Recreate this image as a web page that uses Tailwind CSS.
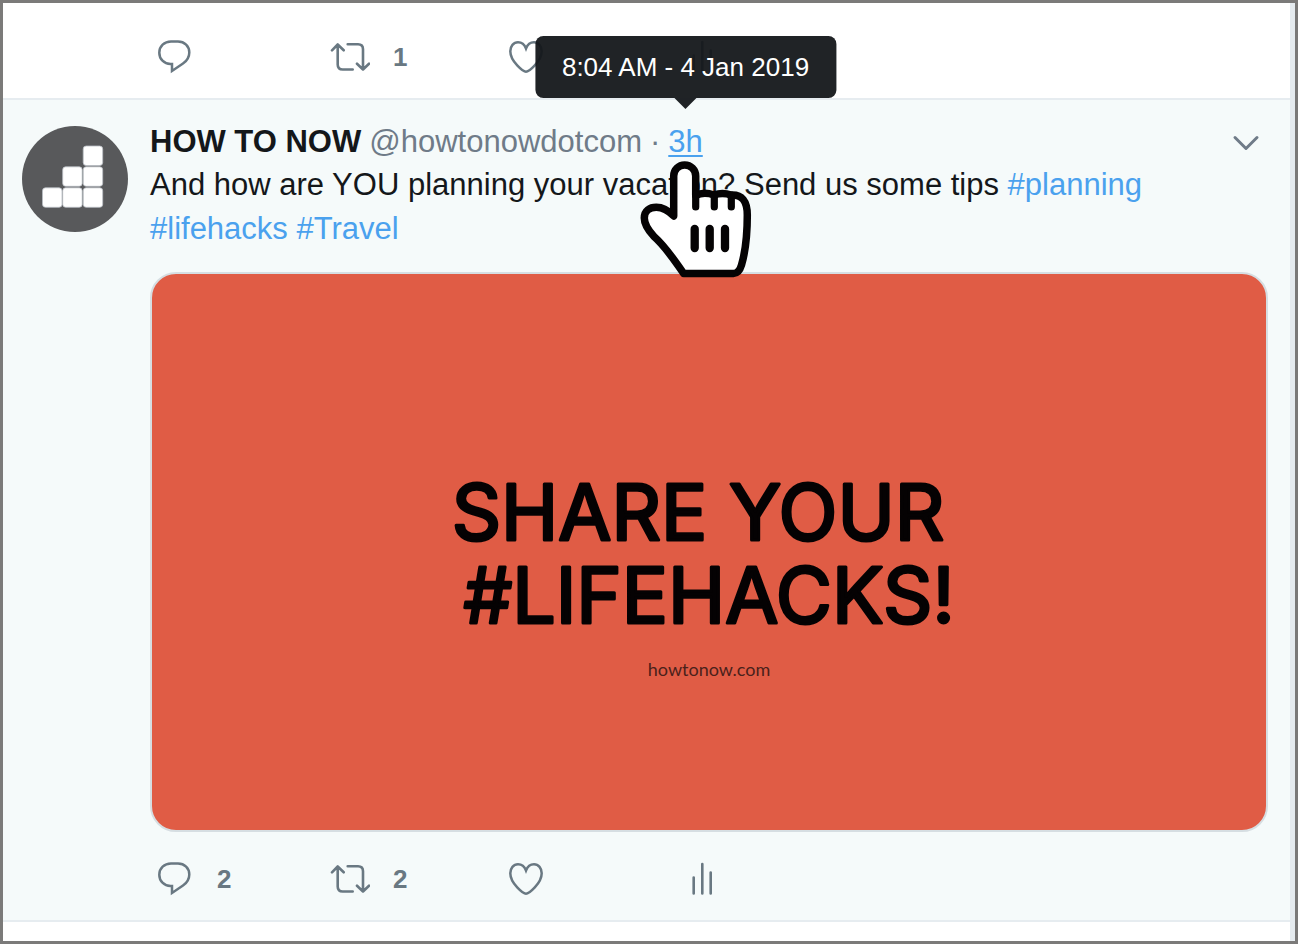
<!DOCTYPE html>
<html lang="en">
<head>
<meta charset="utf-8">
<meta name="viewport" content="width=device-width, initial-scale=1">
<title>HOW TO NOW</title>
<script src="https://cdn.jsdelivr.net/npm/@tailwindcss/browser@4"></script>
</head>
<body class="bg-white font-['Liberation_Sans',Arial,sans-serif] text-[#14171a]">
<svg class="hidden" aria-hidden="true">
  <symbol id="reply" viewBox="0 0 40 40"><path d="M17 4.500h7c6.500 0 11.300 4.700 11.300 11 0 5-2.300 8.300-6.300 11L18 34v-7h-1.500C10 26.800 5.300 22 5.300 15.700 5.300 9.200 10.300 4.500 17 4.500z" stroke-width="2.500"/></symbol>
  <symbol id="retweet" viewBox="0 0 40 40"><path d="M2 13.300 7.700 7.500l6 5.800M7.700 8v19.500q0 5 5 5h10M17.700 7.300H28q5 0 5 5V32M27 26.700 33 32.500l6-5.800" stroke-width="2.600"/></symbol>
  <symbol id="heart" viewBox="0 0 40 40"><path d="M20 11.500C18.500 7.500 15.500 5.200 12 5.200c-4.500 0-7.700 4-7.700 9C4.300 24.500 17.500 34.700 20 34.700S35.700 24.500 35.700 14.200c0-5-3.200-9-7.700-9-3.500 0-6.500 2.300-8 6.300z" stroke-width="2.500"/></symbol>
  <symbol id="activity" viewBox="0 0 40 40"><path d="M11.700 18.500v16M20.300 5v29.500M28.700 13.500v21" stroke-width="2.600"/></symbol>
</svg>

<main class="flex min-h-screen flex-col border-3 border-[#7b7a79]">
  <div class="flex grow flex-col border-r-5 border-[#e6ecf0]">

    <article class="border-b-2 border-[#e6ecf0] pt-[34px] pb-[21px] pl-[151px]">
      <div class="flex text-[26px] leading-10 font-bold text-[#697882]">
        <button type="button" class="flex w-44 gap-[23px]" aria-label="Reply"><svg class="size-10 fill-none stroke-current" stroke-linecap="round"><use href="#reply"/></svg></button>
        <button type="button" class="flex w-44 gap-[23px]" aria-label="Retweet, 1"><svg class="size-10 fill-none stroke-current" stroke-linecap="round" stroke-linejoin="round"><use href="#retweet"/></svg>1</button>
        <button type="button" class="flex w-44" aria-label="Like"><svg class="size-10 fill-none stroke-current"><use href="#heart"/></svg></button>
        <button type="button" class="flex" aria-label="View activity"><svg class="size-10 fill-none stroke-current" stroke-linecap="round"><use href="#activity"/></svg></button>
      </div>
    </article>

    <article class="flex gap-[22px] border-b-2 border-[#e6ecf0] bg-[#f5fafa] pt-[21px] pr-[22px] pb-[21px] pl-[19px]">
      <svg class="mt-[5px] size-[106px] shrink-0" viewBox="0 0 106 106" role="img" aria-label="HOW TO NOW logo">
        <circle cx="53" cy="53" r="53" fill="#58595b"/>
        <g fill="#fff" stroke="#b9bec4" stroke-width=".8">
          <rect x="61.200" y="20" width="19.500" height="19.500" rx="3"/>
          <rect x="40.700" y="40.800" width="19.500" height="19.500" rx="3"/>
          <rect x="61.200" y="40.800" width="19.500" height="19.500" rx="3"/>
          <rect x="20.500" y="61.800" width="19.500" height="19.500" rx="3"/>
          <rect x="40.700" y="61.800" width="19.500" height="19.500" rx="3"/>
          <rect x="61.200" y="61.800" width="19.500" height="19.500" rx="3"/>
        </g>
      </svg>

      <div class="min-w-0 grow">
        <header class="flex items-start justify-between text-[31px] leading-[42px]">
          <div class="flex">
            <a href="#" class="font-bold">HOW TO NOW</a>
            <a href="#" class="ml-2 text-[#6f7b88]">@howtonowdotcom</a>
            <span class="ml-2 text-[#6f7b88]">·</span>
            <a href="#" class="relative ml-2 text-[#4aa1ee] underline decoration-2 underline-offset-3">3h
              <span role="tooltip" class="absolute bottom-full left-1/2 mb-[23px] -translate-x-1/2 rounded-lg bg-[#14171a]/95 px-[27px] text-[26px] leading-[62px] whitespace-nowrap text-white">8:04 AM - 4 Jan 2019<span class="absolute top-full left-1/2 -translate-x-1/2 border-x-11 border-t-11 border-x-transparent border-t-[#14171a]/95"></span></span>
              <svg class="absolute top-[39px] left-1/2 z-10 h-[120px] w-[112px] -translate-x-[46px]" viewBox="0 0 112 120" aria-hidden="true">
                <path d="M33.700 56V16a11 11 0 0 1 22 0v19.500q8-4 18.300-.5 8.500-3 17 0 16.300-1 16.300 20c0 17-2 37-5.800 50q-2.500 8.500-8 8.500H43.700C36 103 27 88 14 76.500 7 69 4.300 64 4.300 58c0-7.500 5.500-10.700 12-10.700 7 0 12.500 3.700 17.400 8.700z" fill="#fff" stroke="#050304" stroke-width="7.500" stroke-linejoin="round"/>
                <path d="M55.700 34v13M74.300 35v12M91.300 35v12" fill="none" stroke="#050304" stroke-width="7.200" stroke-linecap="round"/>
                <path d="M54.700 69v19M69.700 69v19M85 69v19" fill="none" stroke="#050304" stroke-width="8.300" stroke-linecap="round"/>
              </svg>
            </a>
          </div>
          <button type="button" class="flex h-10 w-11 items-center justify-center text-[#6f7b88]" aria-label="More"><svg class="h-5 w-7 fill-none stroke-current" viewBox="0 0 28 20" stroke-width="3" stroke-linecap="round" stroke-linejoin="round"><path d="M3 6.500 14 17.500 25 6.500"/></svg></button>
        </header>

        <p class="text-[31px] leading-11">And how are YOU planning your vacation? Send us some tips <a href="#" class="text-[#4aa1ee]">#planning</a> <a href="#" class="text-[#4aa1ee]">#lifehacks</a> <a href="#" class="text-[#4aa1ee]">#Travel</a></p>

        <figure class="mt-[21px] overflow-hidden rounded-[26px] border-2 border-[#d6dee2] bg-[#e05c45]">
          <svg class="block w-full" viewBox="0 0 1114 556" text-anchor="middle" fill="#050203">
            <g class="font-['Inter',sans-serif] text-[77px] font-normal" stroke="#050203" stroke-width="3" stroke-linejoin="round">
              <text x="546" y="266">SHARE YOUR</text>
              <text x="557" y="349">#LIFEHACKS!</text>
            </g>
            <text class="font-['Lato',sans-serif] text-[18px]" x="557" y="402" fill="#4a211b">howtonow.com</text>
          </svg>
        </figure>

        <div class="mt-[27px] ml-1 flex text-[26px] leading-10 font-bold text-[#697882]">
          <button type="button" class="flex w-44 gap-[23px]" aria-label="Reply, 2"><svg class="size-10 fill-none stroke-current" stroke-linecap="round"><use href="#reply"/></svg>2</button>
          <button type="button" class="flex w-44 gap-[23px]" aria-label="Retweet, 2"><svg class="size-10 fill-none stroke-current" stroke-linecap="round" stroke-linejoin="round"><use href="#retweet"/></svg>2</button>
          <button type="button" class="flex w-44" aria-label="Like"><svg class="size-10 fill-none stroke-current"><use href="#heart"/></svg></button>
          <button type="button" class="flex" aria-label="View activity"><svg class="size-10 fill-none stroke-current" stroke-linecap="round"><use href="#activity"/></svg></button>
        </div>
      </div>
    </article>
  </div>
</main>
</body>
</html>
